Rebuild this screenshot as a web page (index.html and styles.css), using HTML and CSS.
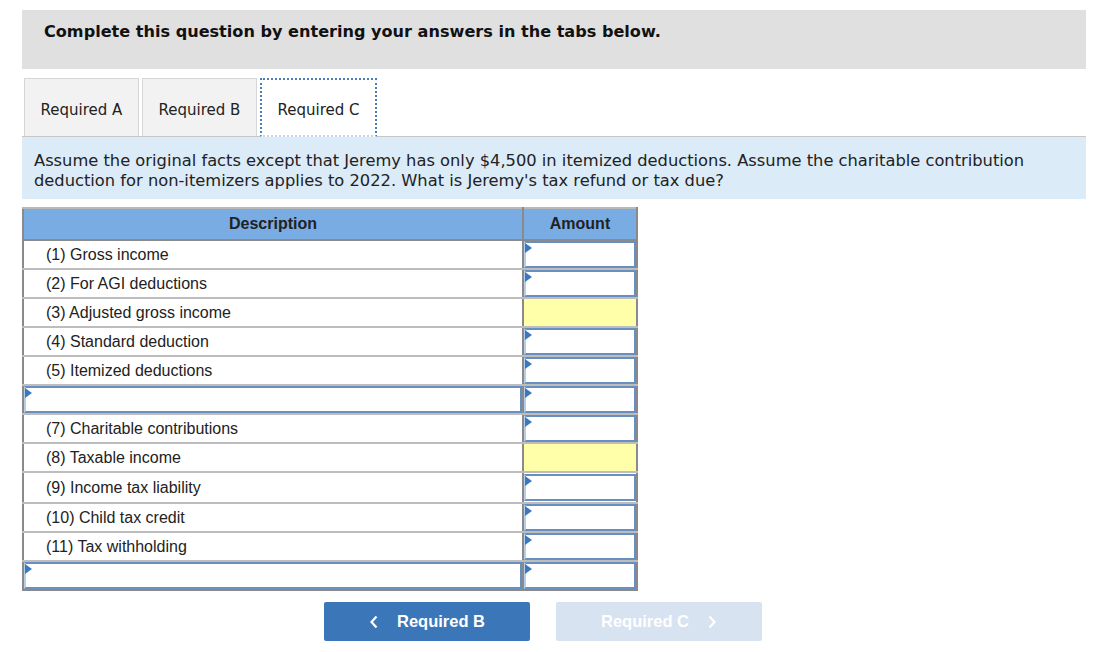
FILE: index.html
```html
<!DOCTYPE html>
<html lang="en">
<head>
  <meta charset="UTF-8">
  <title>Required C</title>
  <link rel="stylesheet" href="styles.css">
</head>
<body>
  <div class="wrap">
    <div class="instructions">Complete this question by entering your answers in the tabs below.</div>

    <div class="tabs">
      <div class="tab">Required A</div>
      <div class="tab">Required B</div>
      <div class="tab active">Required C</div>
    </div>

    <div class="question">
      Assume the original facts except that Jeremy has only $4,500 in itemized deductions. Assume the charitable contribution deduction for non-itemizers applies to 2022. What is Jeremy's tax refund or tax due?
    </div>

    <table class="answer">
      <thead>
        <tr>
          <th class="desc-head">Description</th>
          <th class="amt-head">Amount</th>
        </tr>
      </thead>
      <tbody>
        <tr><td class="label">(1) Gross income</td><td class="amt"><div class="box"></div></td></tr>
        <tr><td class="label">(2) For AGI deductions</td><td class="amt"><div class="box"></div></td></tr>
        <tr><td class="label">(3) Adjusted gross income</td><td class="amt calc"></td></tr>
        <tr><td class="label">(4) Standard deduction</td><td class="amt"><div class="box"></div></td></tr>
        <tr><td class="label">(5) Itemized deductions</td><td class="amt"><div class="box"></div></td></tr>
        <tr><td class="label entry"><div class="box"></div></td><td class="amt"><div class="box"></div></td></tr>
        <tr><td class="label">(7) Charitable contributions</td><td class="amt"><div class="box"></div></td></tr>
        <tr><td class="label">(8) Taxable income</td><td class="amt calc"></td></tr>
        <tr class="tall"><td class="label">(9) Income tax liability</td><td class="amt"><div class="box"></div></td></tr>
        <tr><td class="label">(10) Child tax credit</td><td class="amt"><div class="box"></div></td></tr>
        <tr><td class="label">(11) Tax withholding</td><td class="amt"><div class="box"></div></td></tr>
        <tr class="last"><td class="label entry"><div class="box"></div></td><td class="amt"><div class="box"></div></td></tr>
      </tbody>
    </table>

    <div class="nav">
      <button class="nav-btn prev">
        <svg class="chev" width="10" height="14" viewBox="0 0 10 14"><path d="M7.5 1.5 L2.5 7 L7.5 12.5" fill="none" stroke="#fff" stroke-width="2.2"/></svg>
        Required B
      </button>
      <button class="nav-btn next" disabled>
        Required C
        <svg class="chev" width="10" height="14" viewBox="0 0 10 14"><path d="M2.5 1.5 L7.5 7 L2.5 12.5" fill="none" stroke="#fff" stroke-width="2.2"/></svg>
      </button>
    </div>
  </div>
</body>
</html>
```

FILE: styles.css
```css
body {
  margin: 0;
  font-family: "DejaVu Sans", Verdana, sans-serif;
  color: #222;
  background: #fff;
}
.wrap {
  margin: 10px 0 0 22px;
  width: 1064px;
}
.instructions {
  background: #e0e0e0;
  height: 59px;
  padding: 12px 0 0 22px;
  box-sizing: border-box;
  font-size: 16.1px;
  font-weight: bold;
  color: #111;
}
.tabs {
  display: flex;
  gap: 3px;
  margin-top: 9px;
  padding-left: 2px;
  border-bottom: 1px solid #c8c8c8;
}
.tab {
  width: 115px;
  height: 58px;
  box-sizing: border-box;
  padding-top: 4px;
  background: #f2f2f2;
  border: 1px solid #d6d6d6;
  border-bottom: none;
  font-size: 15px;
  color: #222;
  display: flex;
  align-items: center;
  justify-content: center;
}
.tab.active {
  width: 117px;
  background: #fff;
  border: 2px dotted #4a7ebb;
  border-bottom: 2px dotted #c5d6ea;
  margin-bottom: -1px;
  height: 59px;
}
.question {
  background: #dbebf8;
  padding: 14px 12px 8px 12px;
  font-size: 16.3px;
  line-height: 20px;
  color: #222;
}
.answer {
  border-collapse: collapse;
  margin-top: 8px;
  width: 616px;
  font-family: "Liberation Sans", Arial, sans-serif;
  font-size: 16px;
  border-left: 2px solid #8a8a8a;
  border-right: 2px solid #8a8a8a;
  border-top: 2px solid #b8b8b8;
}
.answer th {
  background: #79ace2;
  height: 30px;
  font-weight: bold;
  color: #222;
  padding: 0;
  border-bottom: 2px solid #8a8a8a;
}
.desc-head {
  width: 498px;
}
.amt-head {
  border-left: 2px solid #8a8a8a;
}
.answer td {
  height: 29px;
  padding: 0;
  border-bottom: 2px solid #bdbdbd;
  box-sizing: border-box;
}
.answer tr.tall td {
  height: 31px;
}
.answer tr.last td {
  height: 28px;
  border-bottom: 2px solid #8a8a8a;
}
.label {
  padding-left: 22px !important;
  color: #222;
}
.label.entry {
  padding-left: 0 !important;
}
.amt {
  border-left: 2px solid #8a8a8a;
}
.amt.calc {
  background: #ffffaa;
}
.box {
  position: relative;
  height: 27px;
  box-sizing: border-box;
  border: 2px solid #6790c0;
  border-left-color: #b8cde6;
  background: #fff;
}
.box::before {
  content: "";
  position: absolute;
  left: -1px;
  top: 0;
  border-top: 5px solid transparent;
  border-bottom: 5px solid transparent;
  border-left: 7px solid #3a78c2;
}
.nav {
  display: flex;
  gap: 26px;
  margin: 11px 0 0 302px;
}
.nav-btn {
  width: 206px;
  height: 39px;
  border: none;
  border-radius: 2px;
  font-family: "Liberation Sans", Arial, sans-serif;
  font-size: 16.5px;
  font-weight: bold;
  color: #fff;
  display: flex;
  align-items: center;
  justify-content: center;
  gap: 18px;
}
.nav-btn.prev {
  background: #3a76b8;
}
.nav-btn.next {
  background: #d7e3f1;
}
```
